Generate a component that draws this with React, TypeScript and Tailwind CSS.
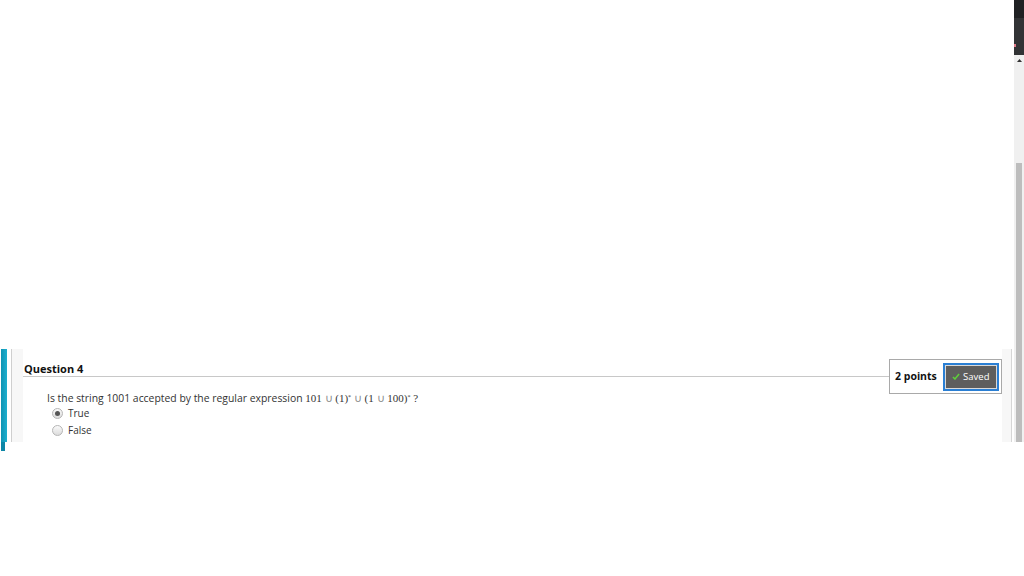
import React from "react";

function Radio({ checked }: { checked?: boolean }) {
  return (
    <span className="w-[11px] h-[11px] rounded-full border border-[#b5b5b5] bg-gradient-to-b from-[#fafafa] to-[#dcdcdc] flex items-center justify-center">
      {checked ? <span className="w-[5px] h-[5px] rounded-full bg-[#555]" /> : null}
    </span>
  );
}

export default function App() {
  return (
    <div
      className="w-[1024px] h-[576px] bg-white flex overflow-hidden"
      style={{ fontFamily: '"Open Sans", "Noto Sans", sans-serif' }}
    >
      <div className="flex-1 flex flex-col">
        <div className="h-[349px]" />
        <div className="flex h-[93px]">
          <div className="w-[1px]" />
          <div className="w-[6px] bg-gradient-to-r from-[#0f93b3] to-[#1eb0cf]" />
          <div className="w-[4px]" />
          <div className="w-[1px] bg-[#cfcfcf]" />
          <div className="w-[11px] bg-[#f7f7f7]" />
          <div className="flex-1 flex flex-col pt-[10px]">
            <div className="flex items-start">
              <div className="flex-1 h-[18px] border-b border-[#c8c8c8] flex items-end">
                <span className="text-[11px] leading-[15px] font-bold text-[#111] pl-[1px]">Question 4</span>
              </div>
              <div className="w-[113px] shrink-0 h-[35px] border border-[#a9a9a9] flex items-center pl-[5px] gap-[6px]">
                <span className="text-[10.5px] font-bold text-[#111] whitespace-nowrap">2 points</span>
                <div className="w-[56px] shrink-0 h-[28px] border-2 border-[#2a7fd4] bg-[#d9d9d9] p-[1px]">
                  <div className="w-full h-full bg-[#5e5e5e] flex items-center justify-center gap-[3px]">
                    <svg width="8" height="7" viewBox="0 0 9 8">
                      <path d="M1 4.5 L3.3 6.8 L8 1.2" stroke="#5fcf3a" strokeWidth="1.8" fill="none" />
                    </svg>
                    <span className="text-[9.5px] text-white leading-none whitespace-nowrap">Saved</span>
                  </div>
                </div>
              </div>
            </div>
            <div className="pl-[24px] -mt-[3px] text-[10.4px] text-[#333] leading-[14px] flex items-baseline whitespace-nowrap">
              <span>Is the string 1001 accepted by the regular expression&nbsp;</span>
              <span style={{ fontFamily: '"Liberation Serif", serif' }} className="text-[11px] text-[#333]">
                101 <span className="text-[#888]">∪</span> (1)<sup className="text-[6px]">*</sup> <span className="text-[#888]">∪</span> (1 <span className="text-[#888]">∪</span> 100)<sup className="text-[6px]">*</sup> ?
              </span>
            </div>
            <div className="pl-[29px] pt-[2px] flex flex-col gap-[4px] text-[10px] text-[#333]">
              <div className="flex items-center gap-[5px] h-[13px]">
                <Radio checked />
                <span>True</span>
              </div>
              <div className="flex items-center gap-[5px] h-[13px]">
                <Radio />
                <span>False</span>
              </div>
            </div>
          </div>
          <div className="w-[9px] bg-[#f7f7f7]" />
          <div className="w-[1px] bg-[#d6d6d6]" />
          <div className="w-[2px]" />
        </div>
        <div className="flex h-[9px]">
          <div className="w-[1px]" />
          <div className="w-[4px] bg-[#0d86a6]" />
        </div>
      </div>
      <div className="w-[10px] flex flex-col">
        <div className="h-[18px] bg-[#202123]" />
        <div className="h-[37px] bg-[#323335] relative">
          <div className="absolute left-0 top-[26px] w-[2px] h-[3px] bg-[#e07b8a]" />
        </div>
        <div className="h-[108px] bg-[#f0f0f0] flex justify-center pt-[4px]">
          <svg width="5" height="3" viewBox="0 0 5 3">
            <path d="M0 3 L2.5 0 L5 3 Z" fill="#333" />
          </svg>
        </div>
        <div className="h-[279px] bg-[#f0f0f0] px-[2px]">
          <div className="h-full bg-[#bdbdbd]" />
        </div>
      </div>
    </div>
  );
}
